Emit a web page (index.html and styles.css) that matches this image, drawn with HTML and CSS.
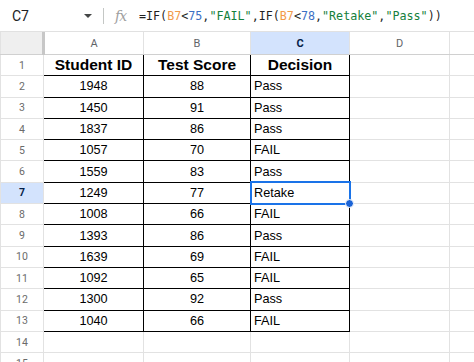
FILE: index.html
```html
<!DOCTYPE html>
<html lang="en">
<head>
  <meta charset="UTF-8"/>
  <meta name="viewport" content="width=device-width, initial-scale=1.0"/>
  <title>Sheet</title>
  <link rel="stylesheet" href="styles.css">
</head>
<body>

  <!-- Formula bar -->
  <div class="formula-bar">
    <div class="name-box">C7</div>
    <div class="name-arrow"></div>
    <div class="bar-sep"></div>
    <div class="fx">fx</div>
    <div class="formula">=IF(<span class="ref">B7</span>&lt;<span class="num">75</span>,<span class="str">"FAIL"</span>,IF(<span class="ref">B7</span>&lt;<span class="num">78</span>,<span class="str">"Retake"</span>,<span class="str">"Pass"</span>))</div>
  </div>

  <!-- Grid -->
  <div class="grid-wrap">
    <table class="grid">
      <colgroup>
        <col class="c-row"><col class="c-a"><col class="c-b"><col class="c-c"><col class="c-d"><col>
      </colgroup>
      <tr class="col-head">
        <th class="corner"></th><th>A</th><th>B</th><th class="sel">C</th><th>D</th><th></th>
      </tr>
      <tr class="title">
        <th class="row-num">1</th><td class="d">Student ID</td><td class="d">Test Score</td><td class="d">Decision</td><td></td><td></td>
      </tr>
      <tr><th class="row-num">2</th><td class="d num-cell">1948</td><td class="d num-cell">88</td><td class="d txt">Pass</td><td></td><td></td></tr>
      <tr><th class="row-num">3</th><td class="d num-cell">1450</td><td class="d num-cell">91</td><td class="d txt">Pass</td><td></td><td></td></tr>
      <tr><th class="row-num">4</th><td class="d num-cell">1837</td><td class="d num-cell">86</td><td class="d txt">Pass</td><td></td><td></td></tr>
      <tr><th class="row-num">5</th><td class="d num-cell">1057</td><td class="d num-cell">70</td><td class="d txt">FAIL</td><td></td><td></td></tr>
      <tr><th class="row-num">6</th><td class="d num-cell">1559</td><td class="d num-cell">83</td><td class="d txt">Pass</td><td></td><td></td></tr>
      <tr><th class="row-num sel">7</th><td class="d num-cell">1249</td><td class="d num-cell">77</td><td class="d txt active"><span>Retake</span><i class="handle"></i></td><td></td><td></td></tr>
      <tr><th class="row-num">8</th><td class="d num-cell">1008</td><td class="d num-cell">66</td><td class="d txt">FAIL</td><td></td><td></td></tr>
      <tr><th class="row-num">9</th><td class="d num-cell">1393</td><td class="d num-cell">86</td><td class="d txt">Pass</td><td></td><td></td></tr>
      <tr><th class="row-num">10</th><td class="d num-cell">1639</td><td class="d num-cell">69</td><td class="d txt">FAIL</td><td></td><td></td></tr>
      <tr><th class="row-num">11</th><td class="d num-cell">1092</td><td class="d num-cell">65</td><td class="d txt">FAIL</td><td></td><td></td></tr>
      <tr><th class="row-num">12</th><td class="d num-cell">1300</td><td class="d num-cell">92</td><td class="d txt">Pass</td><td></td><td></td></tr>
      <tr><th class="row-num">13</th><td class="d num-cell">1040</td><td class="d num-cell">66</td><td class="d txt">FAIL</td><td></td><td></td></tr>
      <tr><th class="row-num">14</th><td></td><td></td><td></td><td></td><td></td></tr>
      <tr><th class="row-num">15</th><td></td><td></td><td></td><td></td><td></td></tr>
    </table>
  </div>

</body>
</html>
```

FILE: styles.css
```css
body {
  margin: 0;
  background: #fff;
  font-family: "Liberation Sans", Arial, sans-serif;
  color: #000;
  overflow: hidden;
}
/* Formula bar */
.formula-bar {
  display: flex;
  align-items: center;
  height: 31px;
  border-bottom: 1px solid #e1e1e1;
  color: #202124;
}
.name-box {
  width: 72px;
  padding-left: 12px;
  font-family: Roboto, sans-serif;
  font-size: 14px;
}
.name-arrow {
  width: 0;
  height: 0;
  border-left: 4px solid transparent;
  border-right: 4px solid transparent;
  border-top: 4px solid #444746;
  margin-top: 1px;
}
.bar-sep {
  width: 1px;
  height: 16px;
  background: #c4c7c5;
  margin-left: 11px;
  margin-right: 11px;
}
.fx {
  font-family: "DejaVu Serif", serif;
  font-style: italic;
  font-size: 14px;
  color: #a0a0a0;
  width: 24px;
  letter-spacing: -1px;
}
.formula {
  font-family: "DejaVu Sans Mono", monospace;
  font-size: 11.7px;
  color: #1f1f1f;
  white-space: nowrap;
}
.formula .ref { color: #f29a4a; }
.formula .num { color: #3b6fc4; }
.formula .str { color: #14803c; }
/* Grid */
.grid-wrap {
  position: relative;
}
.grid {
  border-collapse: collapse;
  table-layout: fixed;
  width: 474px;
}
.c-row { width: 43px; }
.c-a { width: 100px; }
.c-b { width: 107px; }
.c-c { width: 99px; }
.c-d { width: 100px; }
.grid td,
.grid th {
  padding: 0;
  border: 1px solid #e2e2e2;
  height: 20.3px;
  overflow: hidden;
  white-space: nowrap;
}
.grid tr:first-child th { border-top: none; }
.grid td:last-child,
.grid th:last-child { border-right: none; }
.col-head th {
  height: 22px;
  font-family: Roboto, sans-serif;
  font-weight: normal;
  font-size: 11px;
  color: #5f6368;
  border-bottom: 1px solid #d0d0d0;
}
.col-head th.corner {
  background: #efefef;
  border-right: 3px solid #c7c7c7;
}
.col-head th.sel {
  background: #d3e3fd;
  color: #041e49;
  font-weight: bold;
}
.row-num {
  font-family: Roboto, sans-serif;
  font-weight: normal;
  font-size: 10.5px;
  color: #6b6b6b;
}
.row-num.sel {
  background: #d3e3fd;
  color: #041e49;
  font-weight: bold;
}
.grid td.d {
  border: 1px solid #000;
  font-size: 12.7px;
}
.title td.d {
  font-weight: bold;
  font-size: 15.5px;
  text-align: center;
}
.num-cell { text-align: center; }
.txt { padding-left: 3px !important; }
/* Selected cell */
.grid td.active {
  position: relative;
  overflow: visible;
  outline: 2px solid #1a73e8;
  outline-offset: -1px;
}
.handle {
  position: absolute;
  right: -5px;
  bottom: -5px;
  width: 7px;
  height: 7px;
  border-radius: 50%;
  background: #1a63d6;
  border: 1px solid #fff;
}
```
